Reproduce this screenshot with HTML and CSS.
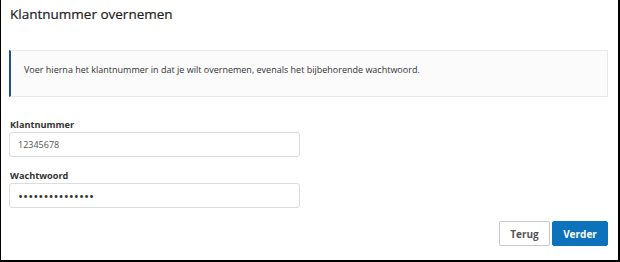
FILE: index.html
```html
<!DOCTYPE html>
<html lang="nl">
<head>
<meta charset="utf-8">
<title>Klantnummer overnemen</title>
<link rel="stylesheet" href="styles.css">
</head>
<body>
<div class="frame">
  <h1 class="title">Klantnummer overnemen</h1>
  <div class="info">Voer hierna het klantnummer in dat je wilt overnemen, evenals het bijbehorende wachtwoord.</div>
  <label class="label first" for="kn">Klantnummer</label>
  <input class="field" id="kn" type="text" value="12345678">
  <label class="label" for="pw">Wachtwoord</label>
  <input class="field field-pw" id="pw" type="password" value="abcdefghijklmno">
  <div class="actions">
    <button class="btn btn-back" type="button">Terug</button>
    <button class="btn btn-next" type="button">Verder</button>
  </div>
</div>
</body>
</html>
```

FILE: styles.css
```css
html, body {
  margin: 0;
  padding: 0;
  background: #fff;
}
body {
  font-family: "Open Sans", "Liberation Sans", sans-serif;
  color: #333;
}
.frame {
  box-sizing: border-box;
  width: 620px;
  height: 262px;
  border-left: 1px solid #000;
  border-right: 2px solid #000;
  border-bottom: 2px solid #000;
  padding: 5px 10px 0 8px;
  display: flex;
  flex-direction: column;
}
.title {
  margin: 0 0 0 1px;
  font-size: 13.5px;
  line-height: 18px;
  font-weight: 400;
  color: #222;
  -webkit-text-stroke: 0.2px #222;
}
.info {
  margin-top: 27px;
  box-sizing: border-box;
  height: 47px;
  background: #fbfbfb;
  border: 1px solid #e8e8e8;
  border-left: 2px solid #1f4e8c;
  padding: 13px 13px 0 13px;
  font-size: 9px;
  line-height: 12px;
  color: #333;
}
.label {
  margin-top: 12px;
  font-size: 9.2px;
  line-height: 13px;
  font-weight: 700;
  color: #333;
  padding-left: 1px;
}
.label.first {
  margin-top: 21px;
}
.field {
  margin: 1px 0 0 0;
  box-sizing: border-box;
  width: 291px;
  height: 25px;
  border: 1px solid #dcdcdc;
  border-radius: 3px;
  padding: 0 8px;
  font-family: "Open Sans", "Liberation Sans", sans-serif;
  font-size: 9px;
  color: #555;
  background: #fff;
  outline: none;
}
.field-pw {
  font-size: 13.5px;
  color: #333;
}
.actions {
  margin-top: 13px;
  display: flex;
  justify-content: flex-end;
  gap: 2px;
}
.btn {
  box-sizing: border-box;
  height: 25px;
  border-radius: 2px;
  font-family: "Open Sans", "Liberation Sans", sans-serif;
  font-size: 10px;
  font-weight: 700;
  padding: 0;
  cursor: pointer;
}
.btn-back {
  width: 51px;
  background: #fff;
  border: 1px solid #c8c8c8;
  color: #555;
}
.btn-next {
  width: 56px;
  background: #0b72bb;
  border: 1px solid #0b72bb;
  color: #fff;
}
```
